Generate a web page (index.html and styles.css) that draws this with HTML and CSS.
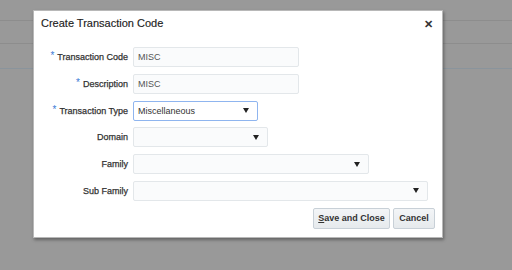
FILE: index.html
```html
<!DOCTYPE html>
<html>
<head>
<meta charset="utf-8">
<link rel="stylesheet" href="styles.css">
</head>
<body>
<div class="backdrop">
  <div class="bg-row r1"></div>
  <div class="bg-row r2"></div>
  <div class="bg-row r3"></div>
</div>
<div class="dialog">
  <div class="dlg-head">
    <span class="dlg-title">Create Transaction Code</span>
    <span class="dlg-close">&#x2715;</span>
  </div>
  <div class="form">
    <div class="lbl"><span class="req">*</span>Transaction Code</div>
    <div class="field"><div class="input w166">MISC</div></div>

    <div class="lbl"><span class="req">*</span>Description</div>
    <div class="field"><div class="input w166">MISC</div></div>

    <div class="lbl"><span class="req">*</span>Transaction Type</div>
    <div class="field"><div class="input select focus w125">Miscellaneous<span class="arrow"></span></div></div>

    <div class="lbl">Domain</div>
    <div class="field"><div class="input select w135"><span class="arrow"></span></div></div>

    <div class="lbl">Family</div>
    <div class="field"><div class="input select w236"><span class="arrow"></span></div></div>

    <div class="lbl">Sub Family</div>
    <div class="field"><div class="input select w295"><span class="arrow"></span></div></div>
  </div>
  <div class="buttons">
    <button class="btn btn-save"><u>S</u>ave and Close</button>
    <button class="btn btn-cancel">Cancel</button>
  </div>
</div>
</body>
</html>
```

FILE: styles.css
```css
html, body {
  margin: 0;
  padding: 0;
}
body {
  width: 512px;
  height: 270px;
  background: #999999;
  font-family: "Liberation Sans", Arial, sans-serif;
  overflow: hidden;
  position: relative;
}
.bg-row {
  border-bottom: 1px solid #8d8d8d;
}
.r1 { height: 20px; }
.r2 { height: 22px; }
.r3 { height: 24px; border-bottom-color: #8a949c; }

.dialog {
  position: absolute;
  left: 33px;
  top: 10px;
  width: 408px;
  height: 226px;
  background: #ffffff;
  border: 1px solid #b8b8b8;
  box-shadow: 1px 2px 3px rgba(0,0,0,0.35);
  box-sizing: content-box;
}
.dlg-head {
  display: flex;
  justify-content: space-between;
  align-items: center;
  padding: 5px 9px 0 7px;
  height: 14px;
}
.dlg-title {
  font-size: 11px;
  color: #222;
  -webkit-text-stroke: 0.15px #222;
  line-height: 14px;
}
.dlg-close {
  font-size: 11px;
  font-weight: bold;
  color: #333;
  line-height: 14px;
  margin-top: 1px;
}
.form {
  display: grid;
  grid-template-columns: 94px auto;
  column-gap: 5px;
  row-gap: 6.8px;
  margin-top: 17px;
}
.lbl {
  font-size: 9px;
  color: #333;
  -webkit-text-stroke: 0.25px #333;
  text-align: right;
  line-height: 20px;
  white-space: nowrap;
}
.req {
  color: #3a7bd5;
  -webkit-text-stroke: 0;
  margin-right: 3px;
  font-size: 10px;
  position: relative;
  top: -1px;
}
.field {
  display: flex;
}
.input {
  height: 20px;
  box-sizing: border-box;
  border: 1px solid #e3e7ea;
  border-radius: 2px;
  background: #fafbfc;
  font-size: 9px;
  color: #555;
  line-height: 18px;
  padding-left: 4px;
  display: flex;
  align-items: center;
  justify-content: space-between;
  padding-right: 8px;
}
.focus {
  border-color: #8fb5ef;
  background: #ffffff;
  color: #333;
}
.w166 { width: 166px; }
.w125 { width: 125px; }
.w135 { width: 135px; }
.w236 { width: 236px; }
.w295 { width: 295px; }
.arrow {
  width: 0;
  height: 0;
  border-left: 3px solid transparent;
  border-right: 3px solid transparent;
  border-top: 5px solid #222;
  margin-left: auto;
}
.buttons {
  display: flex;
  justify-content: flex-end;
  gap: 3px;
  padding-right: 7px;
  margin-top: 7px;
}
.btn {
  height: 21px;
  box-sizing: border-box;
  font-family: "Liberation Sans", Arial, sans-serif;
  font-size: 9px;
  font-weight: bold;
  color: #333;
  background: linear-gradient(#f3f5f7, #e6eaed);
  border: 1px solid #c8d0d7;
  border-radius: 2px;
  padding: 0;
  white-space: nowrap;
}
.btn-save { width: 77px; }
.btn-cancel { width: 42px; }
```
